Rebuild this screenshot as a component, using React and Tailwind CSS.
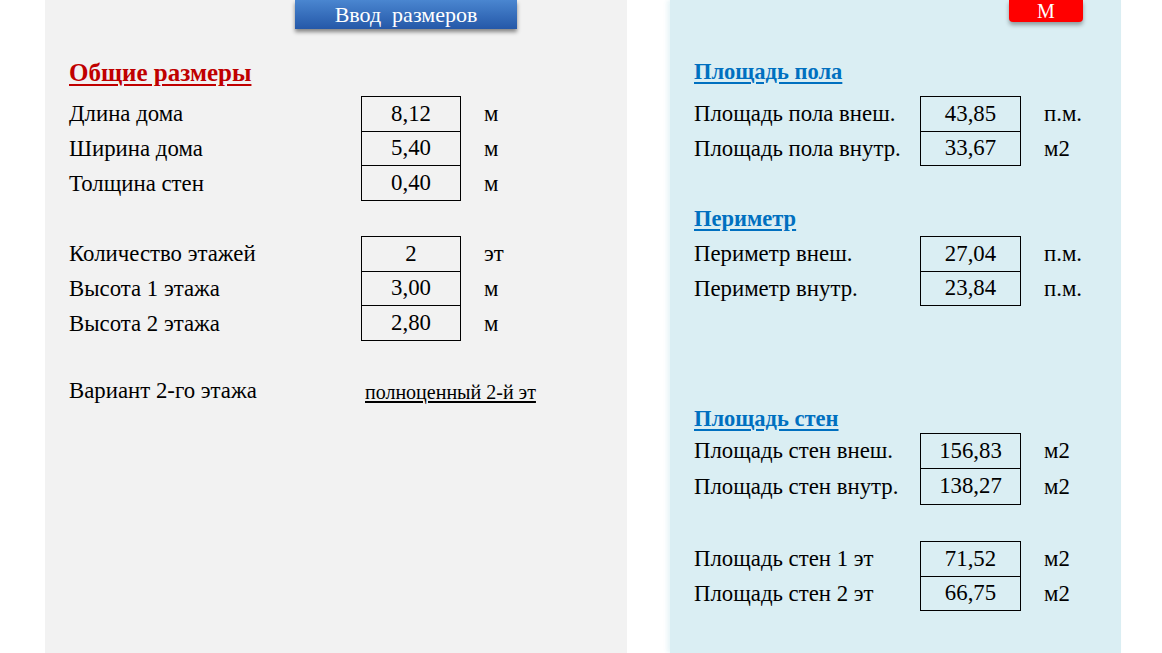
import React from 'react';

const leftCols = 'grid grid-cols-[292px_100px_1fr] items-stretch';
const rightCols = 'grid grid-cols-[226px_101px_1fr] items-stretch';

// одна строка таблицы: подпись, значение в рамке, единица
const Row = ({ label, value, unit, first, cols, h = 'h-[35px]' }) => (
    <div className={`${cols} ${h}`}>
        <div className="flex items-center whitespace-nowrap">{label}</div>
        <div
            className={`flex items-center justify-center border-x border-b border-black ${first ? 'border-t' : ''}`}
        >
            {value}
        </div>
        <div className="flex items-center pl-[23px]">{unit}</div>
    </div>
);

const Heading = ({ children, color, h, size }) => (
    <div className={`${h} ${size} whitespace-nowrap font-bold underline underline-offset-[3px] decoration-2 ${color}`}>
        {children}
    </div>
);

const App = () => {
    return (
        <div className="flex h-[653px] w-[1162px] overflow-hidden bg-white font-['Liberation_Serif',serif] text-[22.8px] text-black">
            {/* левая панель — ввод */}
            <div className="ml-[45px] w-[582px] shrink-0 bg-[#f2f2f2] pl-[24px]">
                <div className="h-[58px]">
                    <button className="ml-[226px] flex h-[29px] w-[222px] items-center justify-center bg-gradient-to-b from-[#4a86d0] to-[#2558a8] text-[22px] text-white shadow-[0_3px_4px_rgba(0,0,0,0.45)]">
                        Ввод&nbsp; размеров
                    </button>
                </div>
                <Heading color="text-[#c00000]" size="text-[25px]" h="h-[38px] leading-[30px]">
                    Общие размеры
                </Heading>
                <Row cols={leftCols} first label="Длина дома" value="8,12" unit="м" />
                <Row cols={leftCols} label="Ширина дома" value="5,40" unit="м" />
                <Row cols={leftCols} label="Толщина стен" value="0,40" unit="м" />
                <div className="h-[35px]" />
                <Row cols={leftCols} first label="Количество этажей" value="2" unit="эт" />
                <Row cols={leftCols} label="Высота 1 этажа" value="3,00" unit="м" />
                <Row cols={leftCols} label="Высота 2 этажа" value="2,80" unit="м" />
                <div className="h-[33px]" />
                <div className={`${leftCols} h-[35px]`}>
                    <div className="flex items-center">Вариант 2-го этажа</div>
                    <div className="col-span-2 flex items-center whitespace-nowrap pl-[4px] text-[20px] underline underline-offset-2">
                        полноценный 2-й эт
                    </div>
                </div>
            </div>

            {/* правая панель — результаты */}
            <div className="ml-[43px] w-[451px] shrink-0 bg-[#daeef3] pl-[24px] shadow-[-3px_0_4px_rgba(218,238,243,0.6)]">
                <div className="h-[58px]">
                    <button className="ml-[315px] flex h-[22px] w-[74px] items-center justify-center rounded-b-[4px] bg-[#ff0000] text-[20px] leading-none text-white shadow-[0_3px_4px_rgba(0,0,0,0.35)]">
                        М
                    </button>
                </div>
                <Heading color="text-[#0070c0]" size="text-[22.5px]" h="h-[38px] leading-[28px]">
                    Площадь пола
                </Heading>
                <Row cols={rightCols} first label="Площадь пола внеш." value="43,85" unit="п.м." />
                <Row cols={rightCols} label="Площадь пола внутр." value="33,67" unit="м2" />
                <div className="h-[35px]" />
                <Heading color="text-[#0070c0]" size="text-[22.5px]" h="h-[35px] leading-[35px]">
                    Периметр
                </Heading>
                <Row cols={rightCols} first label="Периметр внеш." value="27,04" unit="п.м." />
                <Row cols={rightCols} label="Периметр внутр." value="23,84" unit="п.м." />
                <div className="h-[99px]" />
                <Heading color="text-[#0070c0]" size="text-[22.5px]" h="h-[28px] leading-[28px]">
                    Площадь стен
                </Heading>
                <Row cols={rightCols} first h="h-[36px]" label="Площадь стен внеш." value="156,83" unit="м2" />
                <Row cols={rightCols} h="h-[36px]" label="Площадь стен внутр." value="138,27" unit="м2" />
                <div className="h-[36px]" />
                <Row cols={rightCols} first label="Площадь стен 1 эт" value="71,52" unit="м2" />
                <Row cols={rightCols} label="Площадь стен 2 эт" value="66,75" unit="м2" />
            </div>
        </div>
    );
};

export default App;
